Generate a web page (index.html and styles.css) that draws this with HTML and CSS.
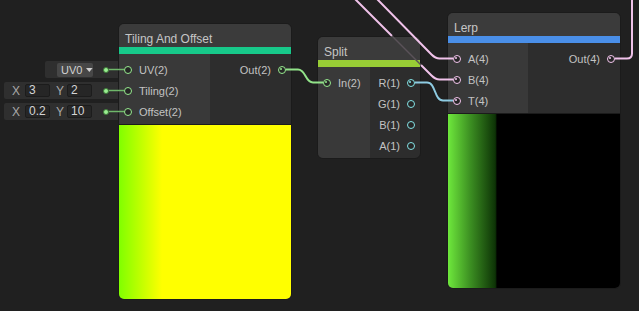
FILE: index.html
```html
<!DOCTYPE html>
<html lang="en">
<head>
    <meta charset="UTF-8">
    <meta name="viewport" content="width=device-width, initial-scale=1.0">
    <title>Shader Graph</title>
    <link rel="stylesheet" href="styles.css">
</head>
<body>
    <div class="graph">

        <!-- Tiling And Offset -->
        <div class="node node-tiling">
            <div class="fields">
                <div class="field-row row-uv">
                    <span class="dropdown">UV0
                        <svg width="7" height="4" viewBox="0 0 7 4"><polygon points="0,0 7,0 3.5,4" fill="#cfcfcf"/></svg>
                    </span>
                    <span class="field-dot"></span>
                </div>
                <div class="field-row row-vec">
                    <span class="axis">X</span><span class="value">3</span>
                    <span class="axis axis-y">Y</span><span class="value">2</span>
                    <span class="field-dot"></span>
                </div>
                <div class="field-row row-vec">
                    <span class="axis">X</span><span class="value">0.2</span>
                    <span class="axis axis-y">Y</span><span class="value">10</span>
                    <span class="field-dot"></span>
                </div>
            </div>
            <div class="title">Tiling And Offset</div>
            <div class="bar bar-teal"></div>
            <div class="ports">
                <div class="inputs">
                    <div class="port"><span class="ring green"></span>UV(2)</div>
                    <div class="port"><span class="ring green"></span>Tiling(2)</div>
                    <div class="port"><span class="ring green"></span>Offset(2)</div>
                </div>
                <div class="outputs">
                    <div class="port">Out(2)<span class="ring green linked"></span></div>
                </div>
            </div>
            <div class="preview preview-tiling"></div>
        </div>

        <!-- Split -->
        <div class="node node-split">
            <div class="title">Split</div>
            <div class="bar bar-lime"></div>
            <div class="ports">
                <div class="inputs">
                    <div class="port"><span class="ring green linked"></span>In(2)</div>
                </div>
                <div class="outputs">
                    <div class="port">R(1)<span class="ring cyan linked"></span></div>
                    <div class="port">G(1)<span class="ring cyan"></span></div>
                    <div class="port">B(1)<span class="ring cyan"></span></div>
                    <div class="port">A(1)<span class="ring cyan"></span></div>
                </div>
            </div>
        </div>

        <!-- Lerp -->
        <div class="node node-lerp">
            <div class="title">Lerp</div>
            <div class="bar bar-blue"></div>
            <div class="ports">
                <div class="inputs">
                    <div class="port"><span class="ring pink linked"></span>A(4)</div>
                    <div class="port"><span class="ring pink linked"></span>B(4)</div>
                    <div class="port"><span class="ring pink linked"></span>T(4)</div>
                </div>
                <div class="outputs">
                    <div class="port">Out(4)<span class="ring pink linked"></span></div>
                </div>
            </div>
            <div class="preview preview-lerp"></div>
        </div>

        <svg class="wires" width="639" height="311" viewBox="0 0 639 311">
            <g class="wire-green">
                <path class="stub" d="M109 69.5 H124"/>
                <path class="stub" d="M109 90.5 H124"/>
                <path class="stub" d="M109 111.5 H124"/>
                <path d="M286 69.5 H298 C306 69.5 305 82.5 313 82.5 H323"/>
            </g>
            <path class="wire-cyan" d="M415 82.5 H427 C436 82.5 434 100.5 443 100.5 H453"/>
            <g class="wire-pink">
                <path d="M377 -1 L431.5 54.5 Q435.5 58.5 439.5 58.5 H453"/>
                <path d="M355 -1 L392 36"/>
                <path d="M421 65 L431.5 75.5 Q435.5 79.5 439.5 79.5 H453"/>
                <path d="M615 58.5 H627 Q632 58.5 632 53.5 V-1"/>
            </g>
            <path class="wire-dim" d="M392 36 L421 65"/>
        </svg>
    </div>
</body>
</html>
```

FILE: styles.css
```css
body {
    margin: 0;
    background-color: #202020;
}

.graph {
    position: relative;
    width: 639px;
    height: 311px;
    overflow: hidden;
    background-color: #202020;
    font-family: "Liberation Sans", Arial, sans-serif;
}

/* nodes sit on the free canvas */
.node {
    position: absolute;
    box-sizing: border-box;
    border: 1px solid #1b1b1b;
    border-radius: 6px;
    background-color: #2d2d2d;
}

.node-tiling {
    left: 118px;
    top: 23px;
    width: 174px;
}

.node-split {
    left: 317px;
    top: 36px;
    width: 104px;
}

.node-lerp {
    left: 447px;
    top: 12px;
    width: 174px;
}

.title {
    height: 23px;
    box-sizing: border-box;
    padding: 8px 0 0 6px;
    font-size: 12px;
    line-height: 14px;
    color: #c6c6c6;
    background-color: #3b3b3b;
    border-radius: 5px 5px 0 0;
}

.bar {
    height: 7px;
}

.bar-teal {
    background-color: #17c98a;
}

.bar-lime {
    background-color: #98cd35;
}

.bar-blue {
    background-color: #4a8fe8;
}

.ports {
    display: flex;
}

.inputs {
    box-sizing: border-box;
    padding: 5px 0 2px 5px;
    background-color: #393939;
}

.node-tiling .inputs {
    width: 91px;
}

.node-split .inputs {
    width: 52px;
    border-bottom-left-radius: 5px;
}

.node-lerp .inputs {
    width: 80px;
}

.outputs {
    flex: 1;
    padding: 5px 5px 2px 0;
}

.port {
    height: 21px;
    display: flex;
    align-items: center;
    gap: 7px;
    font-size: 11px;
    color: #c3c3c3;
}

.outputs .port {
    justify-content: flex-end;
}

.ring {
    position: relative;
    flex: none;
    width: 8px;
    height: 8px;
    box-sizing: border-box;
    border: 1.5px solid currentColor;
    border-radius: 50%;
    background-color: #262626;
}

.ring.linked::after {
    content: "";
    position: absolute;
    left: 1px;
    top: 1px;
    width: 2px;
    height: 2px;
    border-radius: 50%;
    background-color: currentColor;
}

.green {
    color: #96ea8e;
}

.cyan {
    color: #84e4e7;
}

.pink {
    color: #f5c6ef;
}

.preview {
    height: 174px;
    border-top: 1px solid #1b1b1b;
    border-radius: 0 0 5px 5px;
}

.preview-tiling {
    background: linear-gradient(to right, #80ff00 0%, #ffff00 25%);
}

.preview-lerp {
    background: linear-gradient(to right, #6ee83c 0%, #3c8f22 13%, #0d3306 27.5%, #000 28.5%);
}

/* default value fields left of the Tiling node */
.fields {
    position: absolute;
    right: calc(100% + 1px);
    top: 37px;
    display: flex;
    flex-direction: column;
    align-items: flex-end;
    gap: 4px;
}

.field-row {
    height: 17px;
    display: flex;
    align-items: center;
    padding-right: 9px;
    background-color: #2f2f2f;
    border-radius: 2px 0 0 2px;
}

.row-uv {
    padding-left: 12px;
}

.row-vec {
    padding-left: 8px;
}

.dropdown {
    width: 36px;
    height: 14px;
    box-sizing: border-box;
    display: flex;
    align-items: center;
    gap: 4px;
    padding-left: 4px;
    font-size: 11px;
    color: #d2d2d2;
    background-color: #474747;
    border-radius: 2px;
}

.axis {
    width: 13px;
    font-size: 12px;
    color: #a8a8a8;
}

.axis-y {
    width: 11px;
    margin-left: 6px;
}

.value {
    width: 25px;
    height: 13px;
    box-sizing: border-box;
    padding-left: 3px;
    font-size: 12px;
    line-height: 11px;
    color: #d4d4d4;
    background-color: #262626;
    border: 1px solid #1c1c1c;
    border-radius: 2px;
}

.field-dot {
    width: 6px;
    height: 6px;
    margin-left: 11px;
    box-sizing: border-box;
    border-radius: 50%;
    border: 1px solid #3f7a3a;
    background-color: #9aef92;
}

.row-uv .field-dot {
    margin-left: 10px;
}

/* connections */
.wires {
    position: absolute;
    left: 0;
    top: 0;
    pointer-events: none;
    fill: none;
    stroke-width: 2;
}

.wire-green {
    stroke: #92e389;
}

.wire-green .stub {
    stroke: #6fb76a;
    stroke-width: 1.5;
}

.wire-cyan {
    stroke: #8ecbe2;
}

.wire-pink {
    stroke: #f0c2ea;
}

.wire-dim {
    stroke: #5a5259;
    stroke-width: 1.5;
}
```
